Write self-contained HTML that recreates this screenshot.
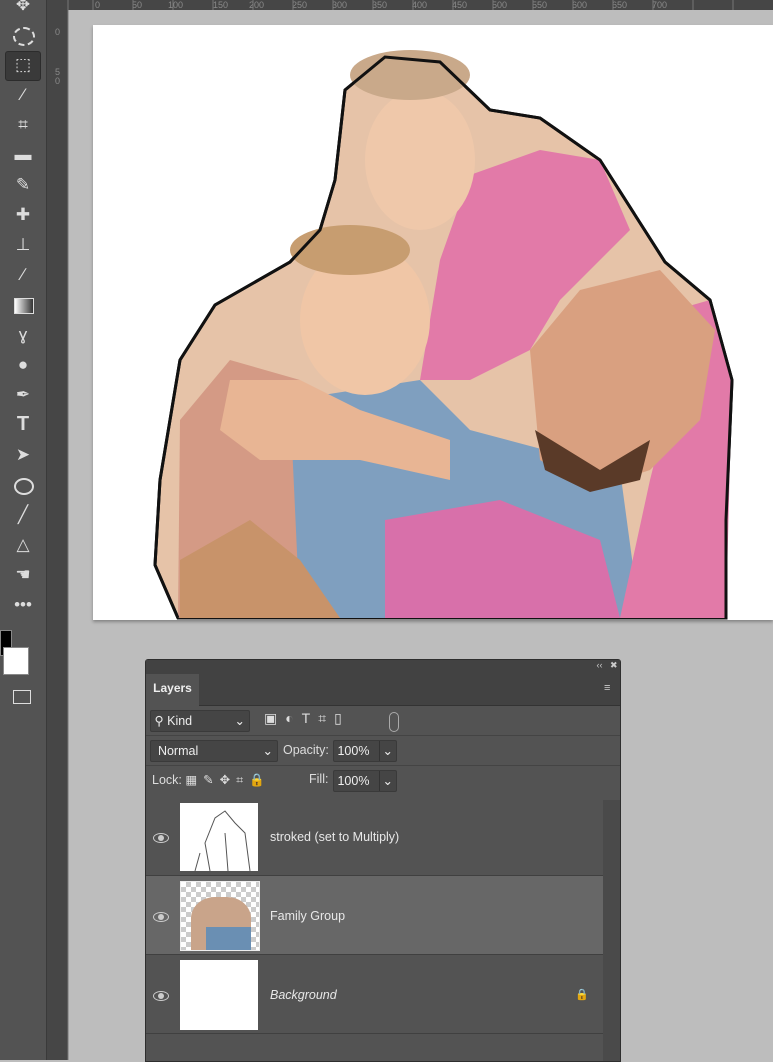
<!DOCTYPE html>
<html><head><style>
body{margin:0;width:773px;height:1060px;overflow:hidden;background:#bdbdbd;font-family:"Liberation Sans",sans-serif;position:relative}
.abs{position:absolute}
#tools{left:0;top:0;width:46px;height:1060px;background:#535353;border-right:1px solid #3a3a3a}
#vr{left:47px;top:0;width:21px;height:1060px;background:#464646}
#hr{left:47px;top:0;width:726px;height:10px;background:#464646}
.t{position:absolute;left:12px;width:22px;height:18px;color:#ddd;font-size:17px;text-align:center;line-height:18px}
#panel{left:145px;top:659px;width:474px;height:401px;background:#535353;border:1px solid #2e2e2e;border-radius:3px 3px 0 0}
.row{position:absolute;left:0;width:457px;border-bottom:1px solid #404040;color:#e8e8e8;font-size:12.5px}
.eye{position:absolute;left:7px;width:14px;height:8px;border:1.5px solid #ccc;border-radius:50%}
.eye:after{content:"";position:absolute;left:4px;top:1px;width:6px;height:6px;background:#ccc;border-radius:50%}
.thumb{position:absolute;left:34px;width:78px;height:68px;background:#fff}
.box{position:absolute;border:1px solid #3a3a3a;background:#454545;border-radius:2px;color:#eee;font-size:12.5px}
</style></head><body>
<div class="abs" id="tools">
<div class="t" style="top:-4px">✥</div>
<div class="abs" style="left:13px;top:27px;width:18px;height:15px;border:2px dashed #ddd;border-radius:50%"></div>
<div class="abs" style="left:5px;top:51px;width:34px;height:28px;background:#3a3a3a;border-radius:3px;border:1px solid #2c2c2c"></div>
<div class="t" style="top:56px">⬚</div>
<div class="t" style="top:86px">⁄</div>
<div class="t" style="top:116px">⌗</div>
<div class="t" style="top:146px">▬</div>
<div class="t" style="top:176px">✎</div>
<div class="t" style="top:206px">✚</div>
<div class="t" style="top:236px">⊥</div>
<div class="t" style="top:266px">∕</div>
<div class="abs" style="left:14px;top:298px;width:18px;height:14px;background:linear-gradient(90deg,#fff,#333);border:1px solid #ddd"></div>
<div class="t" style="top:326px">ɣ</div>
<div class="t" style="top:356px">●</div>
<div class="t" style="top:386px">✒</div>
<div class="t" style="top:415px;font-weight:bold;font-size:20px">T</div>
<div class="t" style="top:446px">➤</div>
<div class="abs" style="left:14px;top:478px;width:16px;height:13px;border:2px solid #ddd;border-radius:50%"></div>
<div class="t" style="top:506px">╱</div>
<div class="t" style="top:536px">△</div>
<div class="t" style="top:566px">☚</div>
<div class="t" style="top:596px">•••</div>
<div class="abs" style="left:0;top:630px;width:10px;height:24px;background:#000;border:1px solid #888"></div>
<div class="abs" style="left:3px;top:647px;width:24px;height:26px;background:#fff;border:1px solid #888"></div>
<div class="abs" style="left:13px;top:690px;width:16px;height:12px;border:1.5px solid #ddd"></div>
</div>
<div class="abs" id="vr"></div>
<div class="abs" id="hr"></div>
<svg class="abs" style="left:47px;top:0" width="726" height="1060">
<g fill="#8a8a8a" font-size="9" font-family="Liberation Sans">
<text x="48" y="8">0</text><text x="85" y="8">50</text><text x="121" y="8">100</text><text x="166" y="8">150</text><text x="202" y="8">200</text><text x="245" y="8">250</text><text x="285" y="8">300</text><text x="325" y="8">350</text><text x="365" y="8">400</text><text x="405" y="8">450</text><text x="445" y="8">500</text><text x="485" y="8">550</text><text x="525" y="8">600</text><text x="565" y="8">650</text><text x="605" y="8">700</text>
<text x="8" y="35">0</text><text x="8" y="75">5</text><text x="8" y="84">0</text>
</g>
<g stroke="#777">
<line x1="21" y1="0" x2="21" y2="1060"/>
<path d="M46,0v10M86,0v10M126,0v10M166,0v10M206,0v10M246,0v10M286,0v10M326,0v10M366,0v10M406,0v10M446,0v10M486,0v10M526,0v10M566,0v10M606,0v10M646,0v10M686,0v10"/>
</g>
</svg>
<div class="abs" style="left:93px;top:25px;width:680px;height:595px;background:#fff;box-shadow:0 2px 3px rgba(0,0,0,.3)"></div>
<svg class="abs" style="left:0;top:0" width="773" height="620">
<path d="M178,618 L155,565 L160,480 L180,360 L215,305 L290,262 L320,230 L335,180 L345,90 L385,57 L440,62 L490,110 L540,118 L600,160 L635,215 L665,262 L710,300 L732,380 L726,520 L726,618 Z" fill="#e6c3a8" stroke="#111" stroke-width="3"/>
<path d="M180,420 L230,360 L300,380 L300,618 L178,618 Z" fill="#d49a85"/>
<path d="M290,400 L420,380 L470,430 L620,470 L640,618 L300,618 Z" fill="#7f9fbf"/>
<path d="M440,260 L470,175 L540,150 L600,160 L630,230 L560,300 L530,350 L470,380 L420,380 Z" fill="#e27aa8"/>
<path d="M385,520 L500,500 L600,540 L620,618 L385,618 Z" fill="#d870aa"/>
<path d="M640,320 L710,300 L732,380 L726,618 L620,618 L650,480 L670,400 Z" fill="#e27aa8"/>
<path d="M530,350 L580,290 L660,270 L715,330 L700,420 L650,470 L590,490 L540,460 Z" fill="#d9a080"/>
<path d="M535,430 L600,470 L650,440 L640,480 L590,492 L545,470 Z" fill="#5a3a28"/>
<ellipse cx="420" cy="160" rx="55" ry="70" fill="#efc8aa"/>
<ellipse cx="410" cy="75" rx="60" ry="25" fill="#c9a98a"/>
<ellipse cx="365" cy="320" rx="65" ry="75" fill="#f0c6a6"/>
<ellipse cx="350" cy="250" rx="60" ry="25" fill="#c79d70"/>
<path d="M230,380 L300,380 L360,410 L450,440 L450,480 L360,460 L260,460 L220,430Z" fill="#e8b594"/>
<path d="M180,560 L250,520 L300,560 L340,618 L180,618Z" fill="#c8936a"/>
<path d="M178,618 L155,565 L160,480 L180,360 L215,305 L290,262 L320,230 L335,180 L345,90 L385,57 L440,62 L490,110 L540,118 L600,160 L635,215 L665,262 L710,300 L732,380 L726,520 L726,618" fill="none" stroke="#111" stroke-width="3"/>
</svg>
<div class="abs" id="panel">
<div class="abs" style="left:0;top:0;width:474px;height:14px;background:#424242;color:#ccc;font-size:9px;text-align:right">‹‹ &nbsp; ✖&nbsp;</div>
<div class="abs" style="left:0;top:14px;width:474px;height:31px;background:#424242;border-bottom:1px solid #333"></div>
<div class="abs" style="left:0;top:14px;width:53px;height:32px;background:#535353;color:#eee;font-size:12px;font-weight:bold;line-height:28px;text-align:center">Layers</div>
<div class="abs" style="left:458px;top:22px;color:#ccc;font-size:11px">≡</div>
<div class="box" style="left:4px;top:50px;width:98px;height:20px;line-height:20px">&nbsp;⚲ Kind<span style="float:right;margin-right:4px">⌄</span></div>
<div class="abs" style="left:118px;top:50px;color:#ddd;font-size:14px;letter-spacing:8px">▣◐T⌗▯</div>
<div class="abs" style="left:243px;top:52px;width:8px;height:18px;border:1px solid #aaa;border-radius:5px"></div>
<div class="abs" style="left:0;top:75px;width:474px;border-top:1px solid #444"></div>
<div class="box" style="left:4px;top:80px;width:126px;height:20px;line-height:20px">&nbsp;&nbsp;Normal<span style="float:right;margin-right:4px">⌄</span></div>
<div class="abs" style="left:137px;top:83px;color:#ddd;font-size:12.5px">Opacity:</div>
<div class="box" style="left:187px;top:80px;width:62px;height:20px;line-height:20px">&nbsp;100%<span style="float:right;border-left:1px solid #333;padding:0 3px">⌄</span></div>
<div class="abs" style="left:0;top:105px;width:474px;border-top:1px solid #444"></div>
<div class="abs" style="left:6px;top:112px;color:#ddd;font-size:12.5px">Lock: <span style="letter-spacing:6px">▦✎✥⌗🔒</span></div>
<div class="abs" style="left:163px;top:112px;color:#ddd;font-size:12.5px">Fill:</div>
<div class="box" style="left:187px;top:110px;width:62px;height:20px;line-height:20px">&nbsp;100%<span style="float:right;border-left:1px solid #333;padding:0 3px">⌄</span></div>
<div class="abs" style="left:457px;top:140px;width:17px;height:261px;background:#4a4a4a"></div>
<div class="row" style="top:138px;height:77px">
<div class="eye" style="top:35px"></div><div class="thumb" style="top:5px"><svg width="78" height="68"><path d="M30,68 L25,40 L35,15 L45,8 L55,20 L65,30 L70,68 M20,50 L15,68 M45,30 L48,68" stroke="#555" fill="none"/></svg></div>
<div class="abs" style="left:124px;top:32px">stroked (set to Multiply)</div></div>
<div class="row" style="top:216px;height:78px;background:#676767">
<div class="eye" style="top:36px"></div><div class="thumb" style="top:5px;background:repeating-conic-gradient(#ccc 0 25%,#fff 0 50%) 0 0/10px 10px;border:1px solid #eee"><div class="abs" style="left:10px;top:15px;width:60px;height:53px;background:#c9a48a;border-radius:40% 40% 0 0"></div><div class="abs" style="left:25px;top:45px;width:45px;height:23px;background:#6a8fb3"></div></div>
<div class="abs" style="left:124px;top:33px">Family Group</div></div>
<div class="row" style="top:295px;height:78px">
<div class="eye" style="top:36px"></div><div class="thumb" style="top:5px;height:70px"></div>
<div class="abs" style="left:124px;top:33px;font-style:italic">Background</div>
<div class="abs" style="left:429px;top:33px;font-size:11px;color:#ccc">🔒</div></div>
</div>
</body></html>
